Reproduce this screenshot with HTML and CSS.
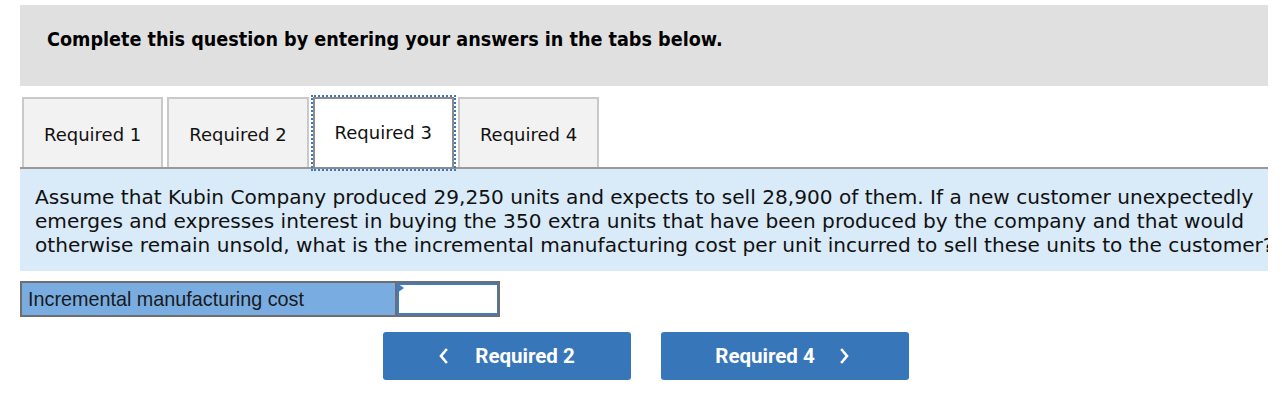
FILE: index.html
```html
<!DOCTYPE html>
<html>
<head>
<meta charset="utf-8">
<link rel="stylesheet" href="styles.css">
</head>
<body>
<div class="page">
  <div class="header">Complete this question by entering your answers in the tabs below.</div>
  <div class="tabs">
    <div class="tab">Required 1</div>
    <div class="tab">Required 2</div>
    <div class="tab active">Required 3</div>
    <div class="tab">Required 4</div>
  </div>
  <div class="panel">
    <p class="question">Assume that Kubin Company produced 29,250 units and expects to sell 28,900 of them. If a new customer unexpectedly<br>emerges and expresses interest in buying the 350 extra units that have been produced by the company and that would<br>otherwise remain unsold, what is the incremental manufacturing cost per unit incurred to sell these units to the customer?</p>
  </div>
  <div class="answer">
    <div class="label">Incremental manufacturing cost</div>
    <div class="input-cell"><div class="input-box"></div><span class="flag"></span></div>
  </div>
  <div class="nav">
    <button class="btn prev"><svg class="chev" width="10" height="16" viewBox="0 0 10 16"><path d="M8 2 L3 8 L8 14" fill="none" stroke="#fff" stroke-width="2.6" stroke-linecap="square"/></svg><span>Required 2</span></button>
    <button class="btn next"><span>Required 4</span><svg class="chev" width="10" height="16" viewBox="0 0 10 16"><path d="M2 2 L7 8 L2 14" fill="none" stroke="#fff" stroke-width="2.6" stroke-linecap="square"/></svg></button>
  </div>
</div>
</body>
</html>
```
FILE: styles.css
```css
html, body {
  margin: 0;
  padding: 0;
  background: #fff;
}
body {
  font-family: "DejaVu Sans", Verdana, sans-serif;
  color: #111;
}
.page {
  margin: 5px 14px 0 20px;
  width: 1248px;
}
.header {
  height: 81px;
  background: #e0e0e0;
  display: flex;
  align-items: center;
  padding-left: 27px;
  padding-bottom: 12px;
  box-sizing: border-box;
  font-family: "DejaVu Sans Condensed", "DejaVu Sans", sans-serif;
  font-weight: bold;
  font-size: 19.6px;
  color: #000;
}
.tabs {
  margin-top: 11px;
  display: flex;
  gap: 4px;
  padding-left: 2px;
  border-bottom: 2px solid #999;
  height: 70px;
}
.tab {
  box-sizing: border-box;
  height: 70px;
  padding: 3px 20px 0;
  border: 2px solid #c9c9c9;
  border-bottom: none;
  background: #f2f2f2;
  display: flex;
  align-items: center;
  font-size: 18px;
  color: #111;
}
.tab.active {
  background: #fff;
  border: 2px solid #8c8c8c;
  height: 72px;
  outline: 2px dotted #3a78c0;
  padding: 0 20px 2px;
}
.panel {
  background: #d9eaf8;
  padding: 16px 15px 14px;
  overflow: hidden;
}
.question {
  margin: 0;
  font-size: 20.12px;
  line-height: 24px;
  white-space: nowrap;
  color: #111;
}
.answer {
  margin-top: 10px;
  display: flex;
  height: 36px;
}
.label {
  box-sizing: border-box;
  width: 377px;
  height: 36px;
  border: 2px solid #6e6e6e;
  background: #79ade2;
  font-family: "Liberation Sans", Arial, sans-serif;
  font-size: 19.8px;
  color: #1a1a1a;
  display: flex;
  align-items: center;
  padding-left: 6px;
}
.input-cell {
  position: relative;
  box-sizing: border-box;
  width: 103px;
  height: 36px;
  border: 2px solid #6e6e6e;
  border-left: none;
  display: flex;
}
.input-box {
  flex: 1;
  border: 2px solid #3f7cc4;
  border-right-width: 1px;
  background: #fff;
}
.flag {
  position: absolute;
  left: 0;
  top: 0;
  width: 0;
  height: 0;
  border-top: 5px solid transparent;
  border-bottom: 5px solid transparent;
  border-left: 7px solid #3f7cc4;
}
.nav {
  margin-top: 15px;
  display: flex;
  justify-content: center;
  gap: 30px;
  padding-left: 3px;
}
.btn {
  width: 248px;
  height: 48px;
  border: none;
  border-radius: 3px;
  background: #3776b8;
  color: #fff;
  font-family: Roboto, "Liberation Sans", sans-serif;
  font-weight: bold;
  font-size: 20.5px;
  display: flex;
  align-items: center;
  justify-content: center;
  gap: 27px;
  padding: 0;
}
.btn.next {
  gap: 25px;
  padding-right: 4px;
}
.chev {
  display: block;
}
```
